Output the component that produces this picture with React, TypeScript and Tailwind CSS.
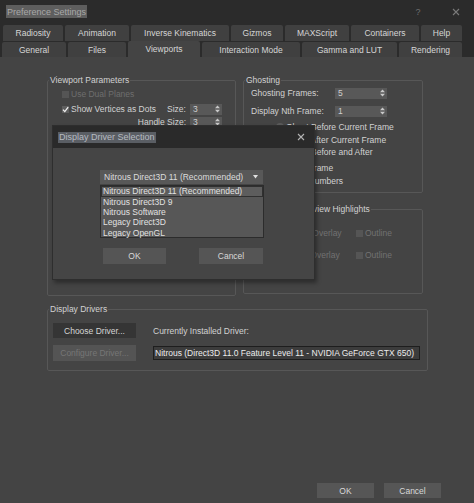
import React from "react";

const row1 = [
  ["Radiosity", "w-[60px]"],
  ["Animation", "w-[64px]"],
  ["Inverse Kinematics", "w-[98px]"],
  ["Gizmos", "w-[52px]"],
  ["MAXScript", "w-[64px]"],
  ["Containers", "w-[68px]"],
  ["Help", "w-[41px]"],
];

const row2 = [
  ["General", "w-[64px]"],
  ["Files", "w-[58px]"],
  ["Viewports", "w-[72px]"],
  ["Interaction Mode", "w-[98px]"],
  ["Gamma and LUT", "w-[95px]"],
  ["Rendering", "w-[63px]"],
];

function Spinner({ value, className }: { value: string; className: string }) {
  return (
    <div
      className={`flex h-[11px] items-center justify-between bg-[#585858] pl-[3px] pr-[2px] text-[#cfcfcf] ${className}`}
    >
      <span>{value}</span>
      <svg width="5" height="8" viewBox="0 0 5 8">
        <polygon points="0,3.3 2.5,0.6 5,3.3" fill="#c8c8c8" />
        <polygon points="0,4.7 2.5,7.4 5,4.7" fill="#c8c8c8" />
      </svg>
    </div>
  );
}

function Check({ checked, disabled }: { checked?: boolean; disabled?: boolean }) {
  return (
    <span
      className={`flex h-[7px] w-[7px] shrink-0 items-center justify-center ${
        disabled ? "bg-[#555555]" : "bg-[#5e5e5e]"
      }`}
    >
      {checked && (
        <svg width="7" height="7" viewBox="0 0 7 7">
          <path d="M1 3.6 L2.8 5.6 L6.2 1.2" stroke="#f2f2f2" strokeWidth="1.3" fill="none" />
        </svg>
      )}
    </span>
  );
}

function Radio({ on }: { on?: boolean }) {
  return (
    <span className="flex h-[8px] w-[8px] shrink-0 items-center justify-center rounded-full bg-[#5a5a5a]">
      {on && <span className="h-[3px] w-[3px] rounded-full bg-[#e8e8e8]" />}
    </span>
  );
}

export default function App() {
  return (
    <div className="relative h-[503px] w-[474px] overflow-hidden bg-[#444444] font-['Liberation_Sans',Arial,sans-serif] text-[8.5px] leading-[10px] text-[#d2d2d2]">
      {/* window title */}
      <div className="flex h-[23px] items-center bg-[#2b2b2b]">
        <span className="ml-[6px] flex h-[13px] items-center bg-[#5e5e5e] px-px text-[9px] text-[#a8a8a8]">
          Preference Settings
        </span>
        <span className="ml-auto w-[10px] text-center text-[9px] text-[#6e6e6e]">?</span>
        <svg className="ml-[29px] mr-[14px]" width="8" height="8" viewBox="0 0 8 8">
          <path d="M1 1 L7 7 M7 1 L1 7" stroke="#7a7a7a" strokeWidth="1.1" />
        </svg>
      </div>

      {/* tabs */}
      <div className="h-[34px] bg-[#2b2b2b] pt-[2px]">
        <div className="flex h-[16px] gap-[2px] pl-[3px]">
          {row1.map(([t, w]) => (
            <div
              key={t}
              className={`flex items-center justify-center rounded-t-[2px] bg-[#404040] text-[#d6d6d6] ${w}`}
            >
              {t}
            </div>
          ))}
        </div>
        <div className="mt-px flex h-[15px] items-end gap-[2px] pl-[2px]">
          {row2.map(([t, w]) => (
            <div
              key={t}
              className={`flex items-center justify-center rounded-t-[2px] text-[#d6d6d6] ${w} ${
                t === "Viewports" ? "h-[16px] bg-[#444444]" : "h-[15px] bg-[#404040]"
              }`}
            >
              {t}
            </div>
          ))}
        </div>
      </div>

      {/* page */}
      <div className="flex h-[446px] flex-col pb-[5px] pl-[47px] pt-[18px]">
        <div className="flex items-start">
          <fieldset className="h-[221px] w-[189px] rounded-[2px] border border-[#575757]">
            <legend className="ml-px px-px leading-[10px]">Viewport Parameters</legend>
            <div className="pl-[14px] pt-[4px]">
              <div className="flex h-[10px] items-center gap-[2px] text-[#6e6e6e]">
                <Check disabled />
                <span>Use Dual Planes</span>
              </div>
              <div className="mt-[4px] flex h-[12px] items-center">
                <div className="flex w-[105px] items-center gap-[2px]">
                  <Check checked />
                  <span>Show Vertices as Dots</span>
                </div>
                <span className="w-[23px]">Size:</span>
                <Spinner value="3" className="w-[32px]" />
              </div>
              <div className="mt-px flex h-[12px] items-center">
                <span className="w-[124px] text-right">Handle Size:</span>
                <Spinner value="3" className="ml-[4px] w-[32px]" />
              </div>
            </div>
          </fieldset>

          <div className="ml-[7px] flex w-[180px] flex-col">
            <fieldset className="h-[118px] rounded-[2px] border border-[#575757]">
              <legend className="ml-px px-px leading-[10px]">Ghosting</legend>
              <div className="pl-[7px]">
                <div className="mt-[2px] flex h-[12px] items-center">
                  <span className="w-[84px]">Ghosting Frames:</span>
                  <Spinner value="5" className="w-[52px]" />
                </div>
                <div className="mt-[6px] flex h-[12px] items-center">
                  <span className="w-[84px]">Display Nth Frame:</span>
                  <Spinner value="1" className="w-[52px]" />
                </div>
                <div className="pl-[25px]">
                  <div className="mt-[4px] flex h-[12px] items-center gap-[2px]">
                    <Radio on />
                    <span>Ghost Before Current Frame</span>
                  </div>
                  <div className="mt-px flex h-[12px] items-center gap-[2px]">
                    <Radio />
                    <span>Ghost After Current Frame</span>
                  </div>
                  <div className="flex h-[12px] items-center gap-[2px]">
                    <Radio />
                    <span>Ghost Before and After</span>
                  </div>
                  <div className="mt-[4px] flex h-[12px] items-center gap-[2px]">
                    <Check />
                    <span>Show Frame</span>
                  </div>
                  <div className="mt-px flex h-[12px] items-center gap-[2px]">
                    <Check />
                    <span>Show Numbers</span>
                  </div>
                </div>
              </div>
            </fieldset>

            <fieldset className="mt-[11px] h-[90px] rounded-[2px] border border-[#575757]">
              <legend className="ml-px px-px leading-[10px]">Selection and Preview Highlights</legend>
              <div className="pl-[22px] text-[#727272]">
                <div className="mt-[13px] flex h-[12px] items-center">
                  <div className="flex w-[90px] items-center gap-[2px]">
                    <Check disabled />
                    <span>Selection Overlay</span>
                  </div>
                  <div className="flex items-center gap-[2px]">
                    <Check disabled />
                    <span>Outline</span>
                  </div>
                </div>
                <div className="mt-[10px] flex h-[12px] items-center">
                  <div className="flex w-[90px] items-center gap-[2px]">
                    <Check disabled />
                    <span>Highlight Overlay</span>
                  </div>
                  <div className="flex items-center gap-[2px]">
                    <Check disabled />
                    <span>Outline</span>
                  </div>
                </div>
              </div>
            </fieldset>
          </div>
        </div>

        <fieldset className="mt-[8px] h-[67px] w-[381px] rounded-[2px] border border-[#575757]">
          <legend className="ml-px px-px leading-[10px]">Display Drivers</legend>
          <div className="grid grid-cols-[83px_267px] gap-x-[17px] gap-y-[7px] pl-[5px] pt-[9px]">
            <button className="flex h-[15px] items-center justify-center bg-[#353535] text-[#d6d6d6]">
              Choose Driver...
            </button>
            <span className="self-center">Currently Installed Driver:</span>
            <button className="flex h-[16px] items-center justify-center bg-[#545454] text-[#767676]">
              Configure Driver...
            </button>
            <div className="flex h-[14px] items-center self-center border border-[#1e1e1e] bg-[#3c3c3c] pl-px text-[#ececec]">
              Nitrous (Direct3D 11.0 Feature Level 11 - NVIDIA GeForce GTX 650)
            </div>
          </div>
        </fieldset>

        <div className="mt-auto flex justify-end gap-[10px] pr-[33px]">
          <button className="h-[15px] w-[57px] bg-[#565656] text-[#d8d8d8]">OK</button>
          <button className="h-[15px] w-[57px] bg-[#565656] text-[#d8d8d8]">Cancel</button>
        </div>
      </div>

      {/* modal dialog */}
      <div className="absolute left-[52px] top-[125px] flex h-[155px] w-[263px] flex-col border border-[#2e2e2e] bg-[#454545] shadow-[2px_3px_4px_rgba(0,0,0,0.35)]">
        <div className="flex h-[22px] shrink-0 items-center bg-[#2a2a2a]">
          <span className="ml-[5px] flex h-[11px] items-center bg-[#5a5e64] px-px text-[9px] text-[#b6bac0]">
            Display Driver Selection
          </span>
          <svg className="ml-auto mr-[9px]" width="8" height="8" viewBox="0 0 8 8">
            <path d="M1 1 L7 7 M7 1 L1 7" stroke="#b4b4b4" strokeWidth="1.1" />
          </svg>
        </div>
        <div className="pl-[47px]">
          <div className="mt-[22px] flex h-[14px] w-[163px] items-center justify-between bg-[#585858] pl-[4px] pr-[5px] text-[#dcdcdc]">
            <span>Nitrous Direct3D 11 (Recommended)</span>
            <svg width="5" height="4" viewBox="0 0 5 4">
              <polygon points="0,0 5,0 2.5,3.5" fill="#e0e0e0" />
            </svg>
          </div>
          <div className="mt-px h-[53px] w-[164px] border border-[#2c2c2c] bg-[#575757] text-[#e2e2e2]">
            <div className="flex h-[10.5px] items-center border border-[#303030] bg-[#5d5d5d] pl-px">
              Nitrous Direct3D 11 (Recommended)
            </div>
            <div className="flex h-[10.3px] items-center pl-[2px]">Nitrous Direct3D 9</div>
            <div className="flex h-[10.3px] items-center pl-[2px]">Nitrous Software</div>
            <div className="flex h-[10.3px] items-center pl-[2px]">Legacy Direct3D</div>
            <div className="flex h-[10.3px] items-center pl-[2px]">Legacy OpenGL</div>
          </div>
          <div className="mt-[10px] flex">
            <button className="ml-[3px] h-[16px] w-[63px] bg-[#555555] text-[#d8d8d8]">OK</button>
            <button className="ml-[33px] h-[16px] w-[64px] bg-[#555555] text-[#d8d8d8]">Cancel</button>
          </div>
        </div>
      </div>
    </div>
  );
}
